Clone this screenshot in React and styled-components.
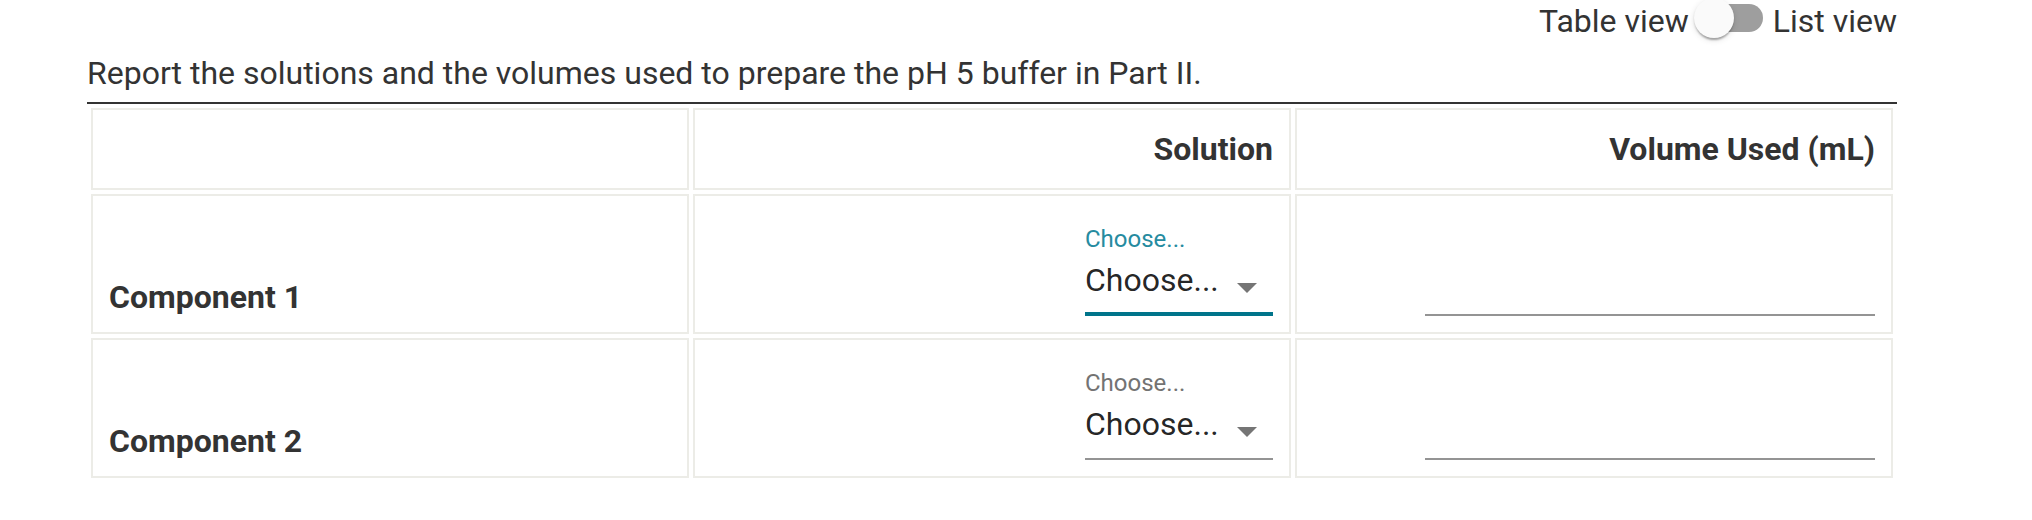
import React from 'react';
import styled, { createGlobalStyle } from 'styled-components';

const GlobalStyle = createGlobalStyle`
  html, body { margin: 0; padding: 0; background: #ffffff; }
  body {
    font-family: Roboto, "Liberation Sans", Arial, sans-serif;
    color: #333333;
  }
`;

const Page = styled.div`
  padding-left: 87px;
  width: 1810px;
`;

const ToggleRow = styled.div`
  display: flex;
  justify-content: flex-end;
  align-items: flex-start;
  height: 41px;
`;

const ToggleLabel = styled.span`
  font-size: 32px;
  line-height: 38px;
  margin-top: 2px;
  color: #333333;
  margin-left: ${p => (p.$side === 'right' ? '10px' : '0')};
  margin-right: ${p => (p.$side === 'left' ? '6px' : '0')};
`;

const Switch = styled.div`
  position: relative;
  flex-shrink: 0;
  width: 68px;
  height: 28px;
  margin-top: 4px;
`;

const Track = styled.div`
  width: 100%;
  height: 100%;
  border-radius: 14px;
  background: #9e9e9e;
`;

const Thumb = styled.div`
  position: absolute;
  top: -6px;
  left: -1px;
  width: 40px;
  height: 40px;
  border-radius: 50%;
  background: #fafafa;
  box-shadow: 0 4px 2px -2px rgba(0, 0, 0, 0.2), 0 2px 2px 0 rgba(0, 0, 0, 0.14),
    0 2px 6px 0 rgba(0, 0, 0, 0.12);
`;

const Title = styled.h2`
  margin: 13px 0 0;
  width: 1810px;
  box-sizing: border-box;
  font-size: 32px;
  font-weight: 400;
  line-height: 38px;
  padding-bottom: 10px;
  border-bottom: 2px solid #333333;
  color: #333333;
`;

const Table = styled.div`
  display: grid;
  grid-template-columns: repeat(3, 598px);
  gap: 4px;
  padding: 4px;
  width: 1810px;
  box-sizing: border-box;
`;

const Cell = styled.div`
  box-sizing: border-box;
  height: ${p => (p.$header ? '82px' : '140px')};
  border: 2px solid #ecece7;
  background: #ffffff;
  padding: ${p => (p.$header ? '0 16px' : '0 16px 16px')};
  display: flex;
  align-items: ${p => (p.$header ? 'center' : 'flex-end')};
  justify-content: ${p => (p.$right ? 'flex-end' : 'flex-start')};
`;

const HeadText = styled.span`
  font-size: 32px;
  line-height: 38px;
  font-weight: 700;
  color: #333333;
`;

const Field = styled.div`
  width: 188px;
  display: flex;
  flex-direction: column;
`;

const FloatLabel = styled.div`
  font-size: 24px;
  line-height: 28px;
  margin-bottom: 8px;
  color: ${p => (p.$focused ? '#268ba0' : '#737373')};
`;

const ValueRow = styled.div`
  display: flex;
  justify-content: space-between;
  align-items: flex-start;
  padding-bottom: 15px;
`;

const Value = styled.span`
  font-size: 32px;
  line-height: 38px;
  color: rgba(0, 0, 0, 0.87);
  white-space: nowrap;
`;

const Arrow = styled.span`
  width: 0;
  height: 0;
  border-left: 10px solid transparent;
  border-right: 10px solid transparent;
  border-top: 10px solid #757575;
  margin-top: 22px;
  margin-right: 16px;
`;

const Underline = styled.div`
  height: ${p => (p.$focused ? '4px' : '2px')};
  margin-top: ${p => (p.$focused ? '-2px' : '0')};
  background: ${p => (p.$focused ? '#00748a' : '#949494')};
`;

const VolumeInput = styled.input`
  display: block;
  width: 450px;
  height: 40px;
  box-sizing: border-box;
  border: 0;
  border-bottom: 2px solid #949494;
  padding: 0;
  background: transparent;
  font-family: inherit;
  font-size: 32px;
  color: rgba(0, 0, 0, 0.87);
  outline: none;
  text-align: right;
`;

function SelectField({ focused }) {
  return (
    <Field>
      <FloatLabel $focused={focused}>Choose...</FloatLabel>
      <ValueRow>
        <Value>Choose...</Value>
        <Arrow />
      </ValueRow>
      <Underline $focused={focused} />
    </Field>
  );
}

const rows = [
  { name: 'Component 1', focused: true },
  { name: 'Component 2', focused: false },
];

export default function App() {
  return (
    <>
      <GlobalStyle />
      <Page>
        <ToggleRow>
          <ToggleLabel $side="left">Table view</ToggleLabel>
          <Switch>
            <Track />
            <Thumb />
          </Switch>
          <ToggleLabel $side="right">List view</ToggleLabel>
        </ToggleRow>
        <Title>Report the solutions and the volumes used to prepare the pH 5 buffer in Part II.</Title>
        <Table>
          <Cell $header />
          <Cell $header $right>
            <HeadText>Solution</HeadText>
          </Cell>
          <Cell $header $right>
            <HeadText>Volume Used (mL)</HeadText>
          </Cell>
          {rows.map(r => (
            <React.Fragment key={r.name}>
              <Cell>
                <HeadText>{r.name}</HeadText>
              </Cell>
              <Cell $right>
                <SelectField focused={r.focused} />
              </Cell>
              <Cell $right>
                <VolumeInput type="text" aria-label={`${r.name} volume`} />
              </Cell>
            </React.Fragment>
          ))}
        </Table>
      </Page>
    </>
  );
}
